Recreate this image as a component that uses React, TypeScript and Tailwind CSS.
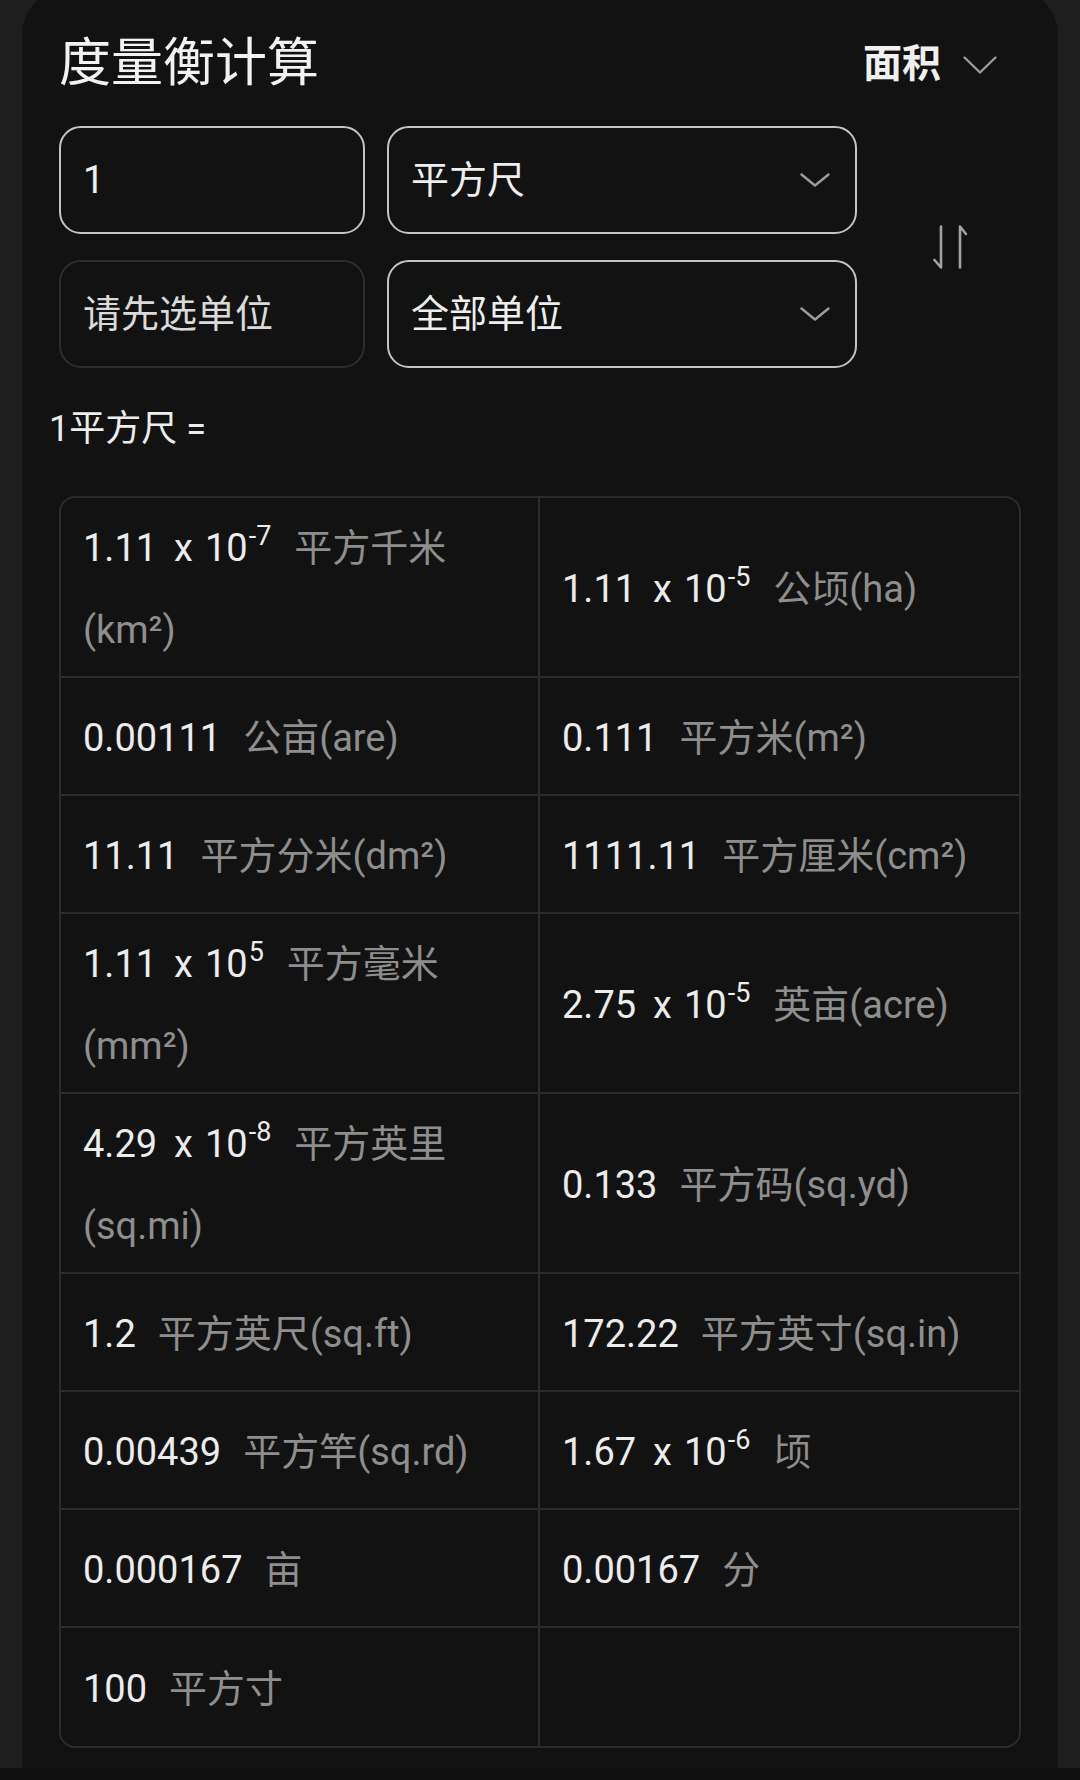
import React from 'react';

type Cell = { value: string; exp?: string; unit: string } | null;

const rows: [Cell, Cell][] = [
  [
    { value: '1.11', exp: '-7', unit: '平方千米(km²)' },
    { value: '1.11', exp: '-5', unit: '公顷(ha)' },
  ],
  [
    { value: '0.00111', unit: '公亩(are)' },
    { value: '0.111', unit: '平方米(m²)' },
  ],
  [
    { value: '11.11', unit: '平方分米(dm²)' },
    { value: '1111.11', unit: '平方厘米(cm²)' },
  ],
  [
    { value: '1.11', exp: '5', unit: '平方毫米(mm²)' },
    { value: '2.75', exp: '-5', unit: '英亩(acre)' },
  ],
  [
    { value: '4.29', exp: '-8', unit: '平方英里(sq.mi)' },
    { value: '0.133', unit: '平方码(sq.yd)' },
  ],
  [
    { value: '1.2', unit: '平方英尺(sq.ft)' },
    { value: '172.22', unit: '平方英寸(sq.in)' },
  ],
  [
    { value: '0.00439', unit: '平方竿(sq.rd)' },
    { value: '1.67', exp: '-6', unit: '顷' },
  ],
  [
    { value: '0.000167', unit: '亩' },
    { value: '0.00167', unit: '分' },
  ],
  [{ value: '100', unit: '平方寸' }, null],
];

const Chevron = ({ w, h }: { w: number; h: number }) => (
  <svg width={w} height={h} viewBox={`0 0 ${w} ${h}`} fill="none">
    <path
      d={`M1.5 1.5 L${w / 2} ${h - 1.5} L${w - 1.5} 1.5`}
      stroke="#9c9c9c"
      strokeWidth="2.4"
      strokeLinecap="round"
      strokeLinejoin="round"
    />
  </svg>
);

const SwapIcon = () => (
  <svg width="34" height="44" viewBox="0 0 34 44" fill="none">
    <g stroke="#a3a3a3" strokeWidth="2.6" strokeLinecap="round" strokeLinejoin="round">
      {/* down arrow */}
      <path d="M8 1.5 V42.5 L1.5 35" />
      {/* up arrow */}
      <path d="M27 42.5 V1.5 L33 9" />
    </g>
  </svg>
);

const ResultCell = ({ cell, left, last }: { cell: Cell; left: boolean; last: boolean }) => (
  <div
    className={`flex items-center min-h-[118px] pl-[22px] pr-[16px] pt-[9px] pb-[5px] border-[#2c2c2c] ${
      left ? 'border-r-2' : ''
    } ${last ? '' : 'border-b-2'}`}
  >
    {cell && (
      <div className="text-[38px] leading-[82px]">
        <span className="text-[#ececec]">{cell.value}</span>
        {cell.exp && (
          <>
            <span className="ml-[17px] text-[#ececec]">x</span>
            <span className="ml-[12px] text-[#ececec]">10</span>
            <sup className="text-[27px] -top-[16px] ml-[1px] text-[#ececec]">{cell.exp}</sup>
          </>
        )}
        <span className={`${cell.exp ? 'ml-[23px]' : 'ml-[22px]'} text-[#8e8e8e]`}>{cell.unit}</span>
      </div>
    )}
  </div>
);

export default function App() {
  return (
    <div className="h-[1780px] overflow-hidden bg-[#1e1e1e] flex flex-col font-['Roboto','Noto_Sans_CJK_SC',sans-serif]">
      <div className="mx-[22px] -mt-[10px] rounded-t-[44px] bg-[#121212] px-[37px] pt-[32px] pb-[20px]">
        {/* Header */}
        <div className="h-[84px] flex items-center justify-between">
          <h1 className="text-[52px] font-normal text-[#f2f2f2] leading-none">度量衡计算</h1>
          <div className="flex items-center mr-[24px]">
            <span className="text-[39px] font-bold text-[#f0f0f0] leading-none">面积</span>
            <div className="ml-[22px] mt-[2px]">
              <Chevron w={34} h={18} />
            </div>
          </div>
        </div>

        {/* Inputs */}
        <div className="mt-[20px] flex">
          <div className="flex flex-col gap-[26px]">
            <div className="flex gap-[22px]">
              <div className="w-[306px] h-[108px] rounded-[22px] border-2 border-[#c4c4c4] flex items-center pl-[22px] text-[38px] text-[#eeeeee]">
                1
              </div>
              <div className="w-[470px] h-[108px] rounded-[22px] border-2 border-[#c4c4c4] flex items-center justify-between pl-[22px] pr-[25px] text-[38px] text-[#eeeeee]">
                <span>平方尺</span>
                <Chevron w={30} h={14} />
              </div>
            </div>
            <div className="flex gap-[22px]">
              <div className="w-[306px] h-[108px] rounded-[22px] border-2 border-[#2e2e2e] flex items-center pl-[22px] text-[38px] text-[#dadada]">
                请先选单位
              </div>
              <div className="w-[470px] h-[108px] rounded-[22px] border-2 border-[#c4c4c4] flex items-center justify-between pl-[22px] pr-[25px] text-[38px] text-[#eeeeee]">
                <span>全部单位</span>
                <Chevron w={30} h={14} />
              </div>
            </div>
          </div>
          <div className="flex-1 flex items-center justify-center pl-[22px]">
            <SwapIcon />
          </div>
        </div>

        {/* Result label */}
        <div className="mt-[36px] h-[50px] -ml-[10px] text-[36px] leading-[50px] text-[#ededed]">1平方尺 =</div>

        {/* Result table */}
        <div className="mt-[42px] border-2 border-[#2c2c2c] rounded-[16px] grid grid-cols-2 overflow-hidden">
          {rows.map((row, i) =>
            row.map((cell, j) => (
              <ResultCell key={`${i}-${j}`} cell={cell} left={j === 0} last={i === rows.length - 1} />
            ))
          )}
        </div>
      </div>
      <div className="flex-1 bg-[#101010]" />
    </div>
  );
}
